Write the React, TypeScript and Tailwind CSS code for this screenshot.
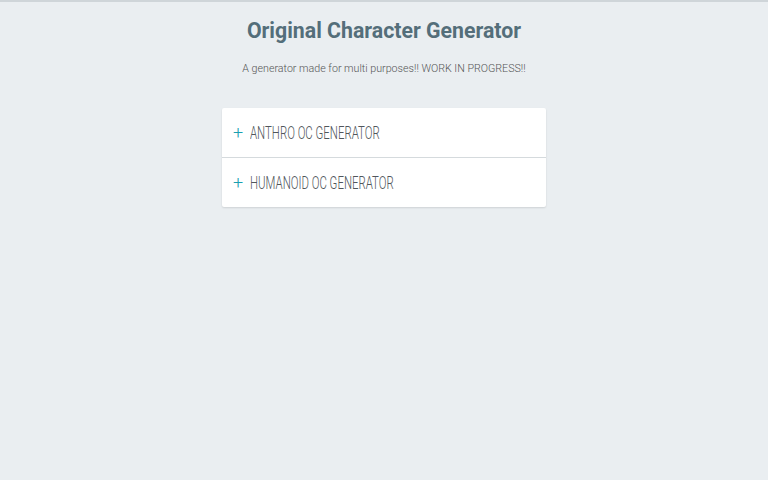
import React from "react";

const items = ["ANTHRO OC GENERATOR", "HUMANOID OC GENERATOR"];

export default function App() {
  return (
    <div className="min-h-[480px] w-full bg-[#eaeef1] border-t-2 border-[#cfd5d9] flex flex-col items-center">
      <h1 className="mt-[15px] text-[21.3px] leading-[28px] font-bold text-[#546e7a] [font-family:Roboto,sans-serif]">
        Original Character Generator
      </h1>
      <p className="mt-[17px] text-[10.7px] leading-[14px] font-light text-[#555] [font-family:Roboto,sans-serif]">
        A generator made for multi purposes!! WORK IN PROGRESS!!
      </p>
      <div className="mt-[32px] w-[324px] bg-white rounded-[2px] shadow-[0_1px_2px_rgba(0,0,0,0.12)]">
        {items.map((t, i) => (
          <div
            key={t}
            className={`h-[49px] box-content flex items-center pl-[11px] ${i > 0 ? "border-t border-[#d5dadd]" : ""}`}
          >
            <span className="text-[#1a9fb0] text-[18px] leading-none font-light mr-[7px] [font-family:Roboto,sans-serif]">+</span>
            <span className="inline-block origin-left scale-x-[0.633] whitespace-nowrap text-[18px] font-light text-[#50565b] [font-family:Roboto,sans-serif]">
              {t}
            </span>
          </div>
        ))}
      </div>
    </div>
  );
}
